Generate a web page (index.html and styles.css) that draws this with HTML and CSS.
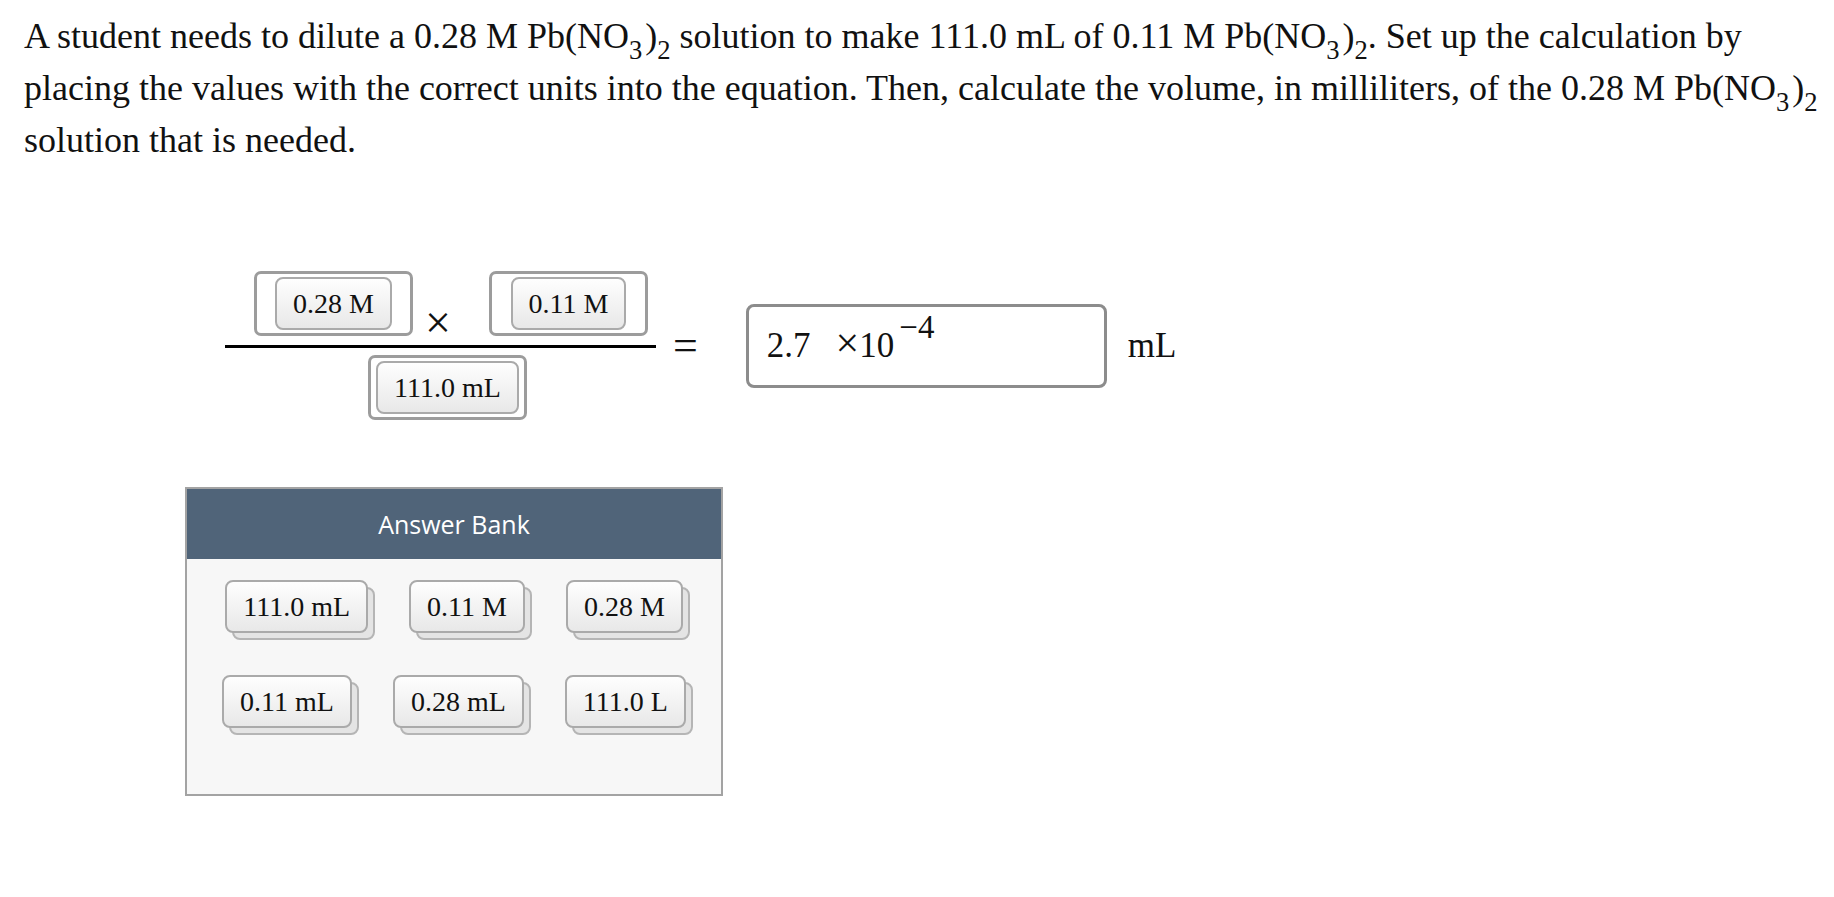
FILE: index.html
```html
<!DOCTYPE html>
<html lang="en">
<head>
  <meta charset="UTF-8" />
  <title>Dilution Calculation</title>
  <link rel="stylesheet" href="styles.css">
</head>
<body>

<main class="question">
  <p class="prompt">A student needs to dilute a 0.28 M Pb(NO<sub class="gap">3</sub>)<sub>2</sub> solution to make 111.0 mL of 0.11 M Pb(NO<sub class="gap">3</sub>)<sub>2</sub>. Set up the calculation by placing the values with the correct units into the equation. Then, calculate the volume, in milliliters, of the 0.28 M Pb(NO<sub class="gap">3</sub>)<sub>2</sub> solution that is needed.</p>

  <!-- Equation with drop slots -->
  <div class="equation">
    <div class="fraction">
      <div class="numerator">
        <div class="slot"><span class="chip">0.28 M</span></div>
        <span class="times">×</span>
        <div class="slot"><span class="chip">0.11 M</span></div>
      </div>
      <div class="fraction-bar"></div>
      <div class="denominator">
        <div class="slot"><span class="chip">111.0 mL</span></div>
      </div>
    </div>
    <span class="equals">=</span>
    <div class="answer-box">
      <span class="answer-value">2.7</span>
      <span class="answer-exp"><span class="mult">×</span>10<sup>−4</sup></span>
    </div>
    <span class="unit">mL</span>
  </div>

  <!-- Answer bank -->
  <div class="answer-bank">
    <div class="bank-title">Answer Bank</div>
    <div class="bank-items">
      <span class="chip stacked">111.0 mL</span>
      <span class="chip stacked">0.11 M</span>
      <span class="chip stacked">0.28 M</span>
      <span class="chip stacked">0.11 mL</span>
      <span class="chip stacked">0.28 mL</span>
      <span class="chip stacked">111.0 L</span>
    </div>
  </div>
</main>

</body>
</html>
```

FILE: styles.css
```css
body {
  margin: 0;
  background: #fff;
  color: #111;
  font-family: "Liberation Serif", "Times New Roman", serif;
}

.question {
  padding: 10px 10px 0 24px;
}

.prompt {
  margin: 0;
  font-size: 36px;
  line-height: 52px;
}

.prompt sub {
  font-size: 0.74em;
  line-height: 0;
  vertical-align: -0.42em;
}

.prompt sub.gap {
  margin-right: 3px;
}

/* Equation row */
.equation {
  display: flex;
  align-items: center;
  margin: 105px 0 0 201px;
}

.fraction {
  display: flex;
  flex-direction: column;
  align-items: center;
  width: 431px;
}

.numerator {
  display: flex;
  align-items: flex-end;
  padding-left: 21px;
}

.denominator {
  padding-left: 14px;
}

.fraction-bar {
  align-self: stretch;
  height: 3px;
  background: #000;
  margin: 9px 0 7px;
}

.times {
  font-size: 46px;
  line-height: 1;
  margin: 0 38px -10px 12px;
}

.slot {
  display: flex;
  justify-content: center;
  box-sizing: border-box;
  min-width: 159px;
  padding: 3px 5px;
  border: 3px solid #9c9c9c;
  border-radius: 7px;
}

.chip {
  display: inline-flex;
  align-items: center;
  box-sizing: border-box;
  height: 53px;
  padding: 0 16px;
  border: 2px solid #aaa;
  border-radius: 8px;
  background: linear-gradient(#fefefe, #e8e8e8);
  font-size: 28px;
  color: #111;
  white-space: nowrap;
}

.equals {
  font-size: 44px;
  line-height: 1;
  margin: 0 48px 0 17px;
}

.answer-box {
  display: flex;
  align-items: center;
  box-sizing: border-box;
  width: 361px;
  height: 84px;
  padding-left: 18px;
  border: 3px solid #8c8c8c;
  border-radius: 8px;
  font-size: 35px;
}

.answer-exp {
  margin-left: 25px;
}

.answer-exp .mult {
  font-size: 1.2em;
  line-height: 0;
}

.answer-exp sup {
  font-size: 33px;
  line-height: 0;
  vertical-align: 19px;
  margin-left: 5px;
}

.unit {
  font-size: 35px;
  margin-left: 21px;
}

/* Answer bank panel */
.answer-bank {
  box-sizing: border-box;
  width: 538px;
  margin: 67px 0 0 161px;
  border: 2px solid #a3a3a3;
}

.bank-title {
  display: flex;
  align-items: center;
  justify-content: center;
  height: 70px;
  background: #506479;
  color: #fff;
  font-family: "Open Sans", "Noto Sans", sans-serif;
  font-size: 25px;
}

.bank-items {
  position: relative;
  z-index: 0;
  display: flex;
  flex-wrap: wrap;
  justify-content: center;
  gap: 42px 41px;
  padding: 21px 20px 66px;
  background: #f7f7f7;
}

.chip.stacked {
  position: relative;
}

/* card peeking out behind each chip */
.chip.stacked::before {
  content: "";
  position: absolute;
  top: 5px;
  left: 5px;
  right: -9px;
  bottom: -9px;
  z-index: -1;
  border: 2px solid #b5b5b5;
  border-radius: 8px;
  background: #e4e4e4;
}
```
